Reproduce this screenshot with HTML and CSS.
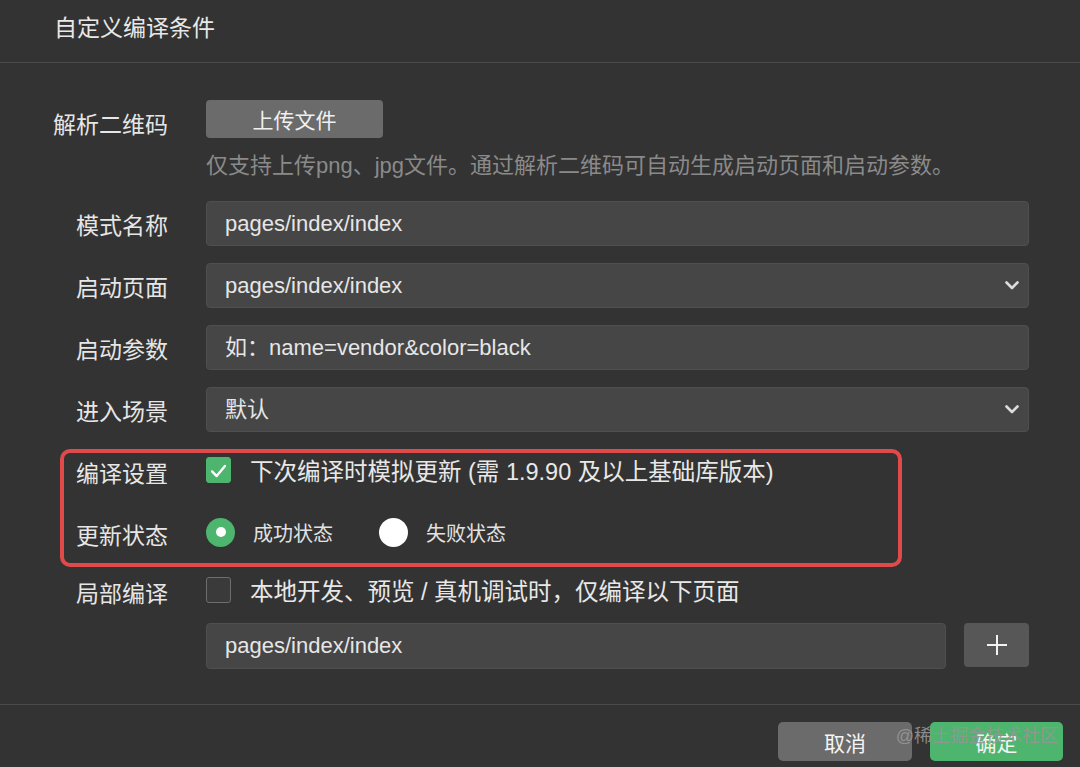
FILE: index.html
```html
<!DOCTYPE html>
<html lang="zh-CN">
<head>
  <meta charset="UTF-8">
  <title>自定义编译条件</title>
  <link rel="stylesheet" href="styles.css">
</head>
<body>
  <header class="dialog-header">
    <h1>自定义编译条件</h1>
  </header>

  <div class="form">
    <div class="row row-qr">
      <label class="row-label">解析二维码</label>
      <div class="row-field">
        <button class="upload-btn">上传文件</button>
        <p class="hint">仅支持上传png、jpg文件。通过解析二维码可自动生成启动页面和启动参数。</p>
      </div>
    </div>

    <div class="row row-input first">
      <label class="row-label">模式名称</label>
      <div class="field">pages/index/index</div>
    </div>

    <div class="row row-input">
      <label class="row-label">启动页面</label>
      <div class="field field-select">
        <span>pages/index/index</span>
        <svg class="chevron" width="14" height="9" viewBox="0 0 14 9"><polyline points="1.5,1.5 7,7 12.5,1.5" /></svg>
      </div>
    </div>

    <div class="row row-input">
      <label class="row-label">启动参数</label>
      <div class="field">如：name=vendor&amp;color=black</div>
    </div>

    <div class="row row-input">
      <label class="row-label">进入场景</label>
      <div class="field field-select">
        <span>默认</span>
        <svg class="chevron" width="14" height="9" viewBox="0 0 14 9"><polyline points="1.5,1.5 7,7 12.5,1.5" /></svg>
      </div>
    </div>

    <div class="highlight">
      <div class="row row-check">
        <label class="row-label">编译设置</label>
        <div class="option-line">
          <span class="checkbox checked">
            <svg width="25" height="26" viewBox="0 0 25 26"><path d="M5.5 13.5 L10.5 18.5 L19.5 7.5" /></svg>
          </span>
          <span class="option-text">下次编译时模拟更新 (需 1.9.90 及以上基础库版本)</span>
        </div>
      </div>

      <div class="row row-check second">
        <label class="row-label">更新状态</label>
        <div class="option-line radios">
          <span class="radio-item">
            <span class="radio checked"></span>
            <span class="radio-text">成功状态</span>
          </span>
          <span class="radio-item">
            <span class="radio"></span>
            <span class="radio-text">失败状态</span>
          </span>
        </div>
      </div>
    </div>

    <div class="row row-check partial">
      <label class="row-label">局部编译</label>
      <div class="option-line">
        <span class="checkbox"></span>
        <span class="option-text">本地开发、预览 / 真机调试时，仅编译以下页面</span>
      </div>
    </div>

    <div class="row row-input last">
      <span></span>
      <div class="page-line">
        <div class="field">pages/index/index</div>
        <button class="plus-btn">
          <svg width="22" height="22" viewBox="0 0 22 22"><path d="M11 1 V21 M1 11 H21" /></svg>
        </button>
      </div>
    </div>
  </div>

  <footer class="dialog-footer">
    <button class="footer-btn cancel-btn">取消</button>
    <button class="footer-btn ok-btn">确定</button>
    <span class="watermark">@稀土掘金技术社区</span>
  </footer>
</body>
</html>
```

FILE: styles.css
```css
:root {
  --bg-color: #333333;
  --field-color: #464646;
  --field-border: #4f4f4f;
  --text-color: #e6e6e6;
  --hint-color: #8a8a8a;
  --green-color: #4db56d;
  --red-color: #e04a4a;
  --gray-btn: #6b6b6b;
}

* {
  margin: 0;
  padding: 0;
  box-sizing: border-box;
}

body {
  font-family: "Liberation Sans", "Noto Sans CJK SC", sans-serif;
  background-color: var(--bg-color);
  color: var(--text-color);
  width: 1080px;
  height: 767px;
  overflow: hidden;
}

.dialog-header {
  height: 63px;
  border-bottom: 1px solid #4a4a4a;
  padding-left: 54px;
}

.dialog-header h1 {
  font-size: 23px;
  font-weight: normal;
  line-height: 56px;
  color: #e8e8e8;
}

.form {
  padding: 37px 51px 0 0;
}

.row {
  display: grid;
  grid-template-columns: 168px 1fr;
  column-gap: 38px;
  align-items: center;
}

.row-label {
  text-align: right;
  font-size: 23px;
  color: #e6e6e6;
  white-space: nowrap;
}

/* upload row */
.row-qr {
  align-items: start;
}

.row-qr .row-label {
  padding-top: 6px;
  line-height: 38px;
}

.upload-btn {
  width: 177px;
  height: 38px;
  background-color: var(--gray-btn);
  border: none;
  border-radius: 4px;
  color: #f0f0f0;
  font-family: inherit;
  font-size: 21px;
}

.hint {
  margin-top: 14px;
  font-size: 22px;
  line-height: 28px;
  color: var(--hint-color);
  white-space: nowrap;
}

/* text fields */
.row-input {
  margin-top: 17px;
}

.row-input.first {
  margin-top: 21px;
}

.field {
  height: 45px;
  background-color: var(--field-color);
  border: 1px solid var(--field-border);
  border-radius: 4px;
  padding-left: 18px;
  font-size: 22px;
  line-height: 43px;
  color: var(--text-color);
  white-space: nowrap;
}

.field-select {
  display: flex;
  justify-content: space-between;
  align-items: center;
  padding-right: 9px;
}

.chevron polyline {
  fill: none;
  stroke: #dcdcdc;
  stroke-width: 2.6;
  stroke-linecap: round;
  stroke-linejoin: round;
}

/* check / radio rows */
.highlight {
  position: relative;
  margin-top: 18px;
}

.highlight::after {
  content: "";
  position: absolute;
  left: 60px;
  right: 127px;
  top: -1px;
  bottom: -15px;
  border: 4px solid var(--red-color);
  border-radius: 10px;
  pointer-events: none;
}

.row-check {
  height: 40px;
}

.row-check .row-label {
  padding-top: 8px;
  line-height: 32px;
}

.row-check.second {
  margin-top: 22px;
}

.row-check.partial {
  margin-top: 18px;
}

.option-line {
  display: flex;
  align-items: center;
  gap: 19px;
}

.option-text {
  font-size: 23.5px;
  color: #e8e8e8;
  white-space: nowrap;
}

.checkbox {
  width: 25px;
  height: 26px;
  border-radius: 3px;
  border: 1px solid #6e6e6e;
  background-color: #3a3a3a;
  display: flex;
}

.checkbox.checked {
  background-color: var(--green-color);
  border-color: var(--green-color);
}

.checkbox svg path {
  fill: none;
  stroke: white;
  stroke-width: 2.6;
  stroke-linecap: round;
  stroke-linejoin: round;
}

.radios {
  gap: 46px;
}

.radio-item {
  display: flex;
  align-items: center;
  gap: 18px;
}

.radio {
  width: 29px;
  height: 29px;
  border-radius: 50%;
  background-color: #ffffff;
  display: flex;
  align-items: center;
  justify-content: center;
}

.radio.checked {
  background-color: var(--green-color);
}

.radio.checked::after {
  content: "";
  width: 10px;
  height: 10px;
  border-radius: 50%;
  background-color: #ffffff;
}

.radio-text {
  font-size: 20px;
  color: #e2e2e2;
}

/* page list row */
.row-input.last {
  margin-top: 13px;
}

.page-line {
  display: flex;
  gap: 18px;
}

.page-line .field {
  flex: 1;
  height: 46px;
  line-height: 44px;
}

.plus-btn {
  width: 65px;
  height: 44px;
  background-color: #575757;
  border: none;
  border-radius: 4px;
  display: flex;
  align-items: center;
  justify-content: center;
}

.plus-btn svg path {
  stroke: #f2f2f2;
  stroke-width: 2;
  fill: none;
}

/* footer */
.dialog-footer {
  position: relative;
  margin-top: 35px;
  border-top: 1px solid #4a4a4a;
  padding: 17px 17px 0 0;
  display: flex;
  justify-content: flex-end;
  gap: 18px;
}

.footer-btn {
  width: 134px;
  height: 39px;
  border: none;
  border-radius: 5px;
  color: #f4f4f4;
  font-family: inherit;
  font-size: 21px;
}

.cancel-btn {
  background-color: var(--gray-btn);
}

.ok-btn {
  width: 133px;
  background-color: var(--green-color);
}

.watermark {
  position: absolute;
  right: 22px;
  top: 19px;
  font-size: 18px;
  line-height: 24px;
  color: rgba(150, 150, 150, 0.9);
  white-space: nowrap;
}
```
